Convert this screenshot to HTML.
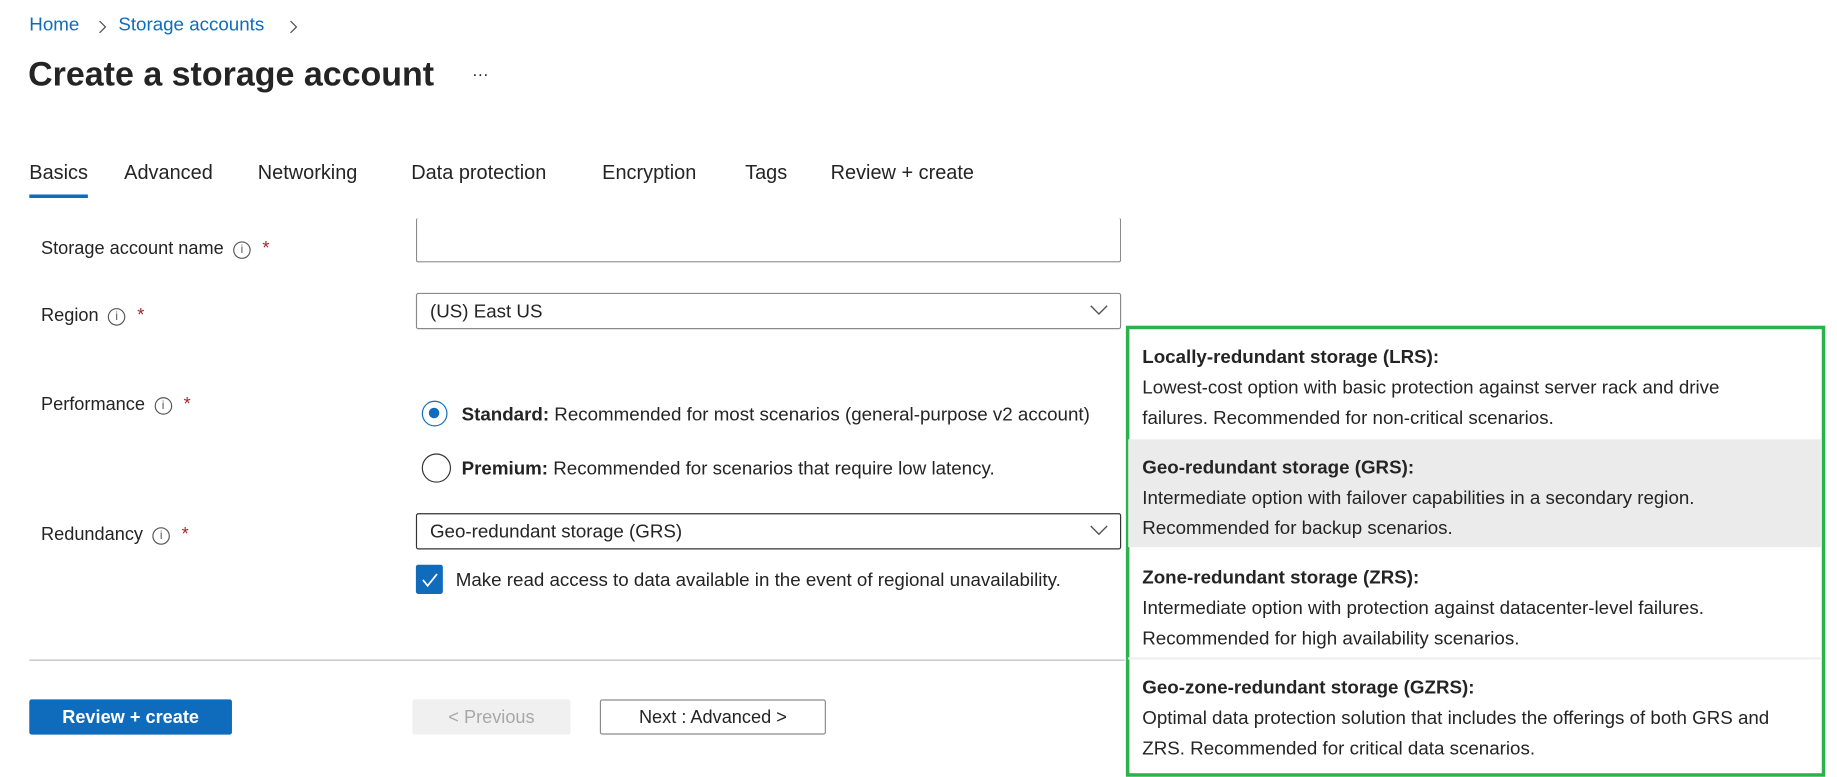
<!DOCTYPE html>
<html><head><meta charset="utf-8"><style>
html,body{margin:0;padding:0;background:#fff;width:1837px;height:777px;overflow:hidden}
#w{position:absolute;left:0;top:0;width:1568px;height:663px;transform:scale(1.17156);transform-origin:0 0;font-family:"Liberation Sans",sans-serif;color:#242424}
.a{position:absolute;white-space:nowrap}
.bc{color:#0f6cbd;font-size:16px;top:13px}
.tab{font-size:17px;top:138px;color:#242424}
.lbl{font-size:15.5px;left:35px}
.info{display:inline-block;width:13px;height:13px;border:1.2px solid #555;border-radius:50%;font-size:10px;line-height:13px;text-align:center;vertical-align:1px;margin:0 10px 0 8px;color:#555}
.star{color:#a4262c}
.box{position:absolute;border:1px solid #8a8a8a;border-radius:2px;background:#fff;box-sizing:border-box}
.chev{position:absolute;right:10px;top:8px}
.txt{font-size:16px}
.item{position:absolute;left:963px;width:592px;box-sizing:border-box;padding-left:12px;font-size:16px;line-height:26px;padding-top:12px}
</style></head><body><div id="w">
<div class="a bc" style="left:25px">Home</div>
<svg class="a" style="left:84px;top:17px" width="8" height="12"><path d="M1 1l5 5-5 5" fill="none" stroke="#555" stroke-width="1.1"/></svg>
<div class="a bc" style="left:101px">Storage accounts</div>
<svg class="a" style="left:247px;top:17px" width="8" height="12"><path d="M1 1l5 5-5 5" fill="none" stroke="#555" stroke-width="1.1"/></svg>
<div class="a" style="left:24px;top:48px;font-size:29px;font-weight:bold;color:#242424">Create a storage account</div>
<div class="a" style="left:403px;top:55px;font-size:14px">···</div>

<div class="a tab" style="left:25px">Basics</div>
<div class="a tab" style="left:106px">Advanced</div>
<div class="a tab" style="left:220px">Networking</div>
<div class="a tab" style="left:351px">Data protection</div>
<div class="a tab" style="left:514px">Encryption</div>
<div class="a tab" style="left:636px">Tags</div>
<div class="a tab" style="left:709px">Review + create</div>
<div class="a" style="left:25px;top:166px;width:50px;height:3px;background:#0f6cbd"></div>

<div class="a lbl" style="top:204px">Storage account name<span class="info">i</span><span class="star">*</span></div>
<div class="box" style="left:355px;top:186px;width:602px;height:38px;border-top:none"></div>

<div class="a lbl" style="top:261px">Region<span class="info">i</span><span class="star">*</span></div>
<div class="box" style="left:355px;top:250px;width:602px;height:31px"><span class="a txt" style="left:11px;top:7px">(US) East US</span>
<svg class="chev" width="16" height="10"><path d="M1 2l7 7 7-7" fill="none" stroke="#555" stroke-width="1.2"/></svg></div>

<div class="a lbl" style="top:337px">Performance<span class="info">i</span><span class="star">*</span></div>
<div class="a" style="left:360px;top:342px;width:22px;height:22px;border:1.5px solid #0f6cbd;border-radius:50%;box-sizing:border-box"><div style="position:absolute;left:5px;top:5px;width:9px;height:9px;border-radius:50%;background:#0f6cbd"></div></div>
<div class="a txt" style="left:394px;top:346px"><b>Standard:</b> Recommended for most scenarios (general-purpose v2 account)</div>
<div class="a" style="left:360px;top:387px;width:25px;height:25px;border:1.3px solid #333;border-radius:50%;box-sizing:border-box"></div>
<div class="a txt" style="left:394px;top:392px"><b>Premium:</b> Recommended for scenarios that require low latency.</div>

<div class="a lbl" style="top:448px">Redundancy<span class="info">i</span><span class="star">*</span></div>
<div class="box" style="left:355px;top:438px;width:602px;height:31px;border-color:#333"><span class="a txt" style="left:11px;top:7px">Geo-redundant storage (GRS)</span>
<svg class="chev" width="16" height="10"><path d="M1 2l7 7 7-7" fill="none" stroke="#555" stroke-width="1.2"/></svg></div>
<div class="a" style="left:355px;top:482px;width:23px;height:25px;background:#0f6cbd;border-radius:2px"><svg width="23" height="25"><path d="M6 13l4 5 8-10" fill="none" stroke="#fff" stroke-width="1.5"/></svg></div>
<div class="a txt" style="left:389px;top:487px">Make read access to data available in the event of regional unavailability.</div>

<div class="a" style="left:25px;top:563px;width:935px;height:1px;background:#bbb"></div>
<div class="a" style="left:25px;top:597px;width:173px;height:30px;background:#0f6cbd;border-radius:2px;color:#fff;font-weight:bold;font-size:15.5px;text-align:center;line-height:31px">Review + create</div>
<div class="a" style="left:352px;top:597px;width:135px;height:30px;background:#f0f0f0;border-radius:2px;color:#a8a8a8;font-size:15.5px;text-align:center;line-height:31px">&lt; Previous</div>
<div class="a" style="left:512px;top:597px;width:193px;height:30px;border:1px solid #8a8a8a;box-sizing:border-box;border-radius:2px;font-size:15.5px;text-align:center;line-height:29px">Next : Advanced &gt;</div>

<div class="a" style="left:961px;top:278px;width:597px;height:385px;border:3px solid #2ab34a;box-sizing:border-box;background:#fff"></div>
<div class="item" style="top:281px;height:93px"><b>Locally-redundant storage (LRS):</b><br>Lowest-cost option with basic protection against server rack and drive<br>failures. Recommended for non-critical scenarios.</div>
<div class="item" style="top:375px;height:92px;background:#ebebeb"><b>Geo-redundant storage (GRS):</b><br>Intermediate option with failover capabilities in a secondary region.<br>Recommended for backup scenarios.</div>
<div class="item" style="top:469px;height:90px"><b>Zone-redundant storage (ZRS):</b><br>Intermediate option with protection against datacenter-level failures.<br>Recommended for high availability scenarios.</div>
<div class="a" style="left:963px;top:561px;width:592px;height:2px;background:#f0f0f0"></div>
<div class="item" style="top:563px;height:92px"><b>Geo-zone-redundant storage (GZRS):</b><br>Optimal data protection solution that includes the offerings of both GRS and<br>ZRS. Recommended for critical data scenarios.</div>
</div></body></html>
